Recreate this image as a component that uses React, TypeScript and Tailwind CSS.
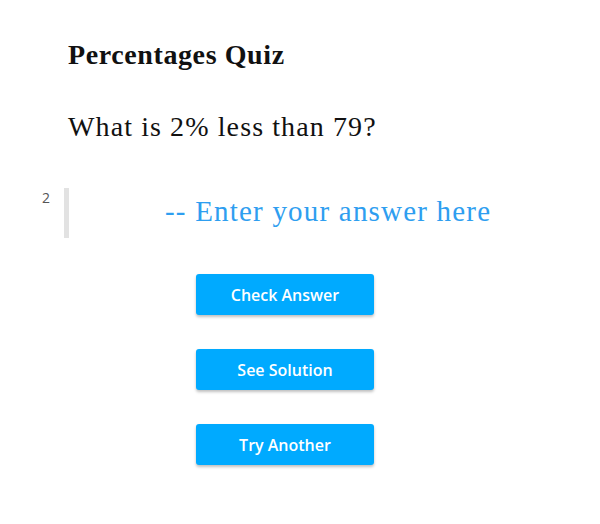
export default function App() {
  return (
    <div className="w-[600px] h-[524px] bg-white" style={{ fontFamily: '"Liberation Serif", serif' }}>
      <div className="pl-[68px] pt-[37px]">
        <h1 className="text-[28px] font-bold leading-[36px] tracking-[0.6px] text-[#111]">Percentages Quiz</h1>
        <p className="mt-[36px] text-[28px] leading-[36px] tracking-[1.1px] text-[#111]">What is 2% less than 79?</p>
      </div>
      <div className="mt-[43px] flex">
        <div className="w-[64px] flex justify-end pr-[14px] text-[14px] leading-[20px] text-[#555]" style={{ fontFamily: '"Open Sans", sans-serif' }}>2</div>
        <div className="w-[5px] h-[50px] bg-[#e2e2e2]"></div>
        <div className="flex-1 pl-[96px] pt-[5px] text-[29px] leading-[36px] tracking-[1.2px] text-[#2e9ef0]">-- Enter your answer here</div>
      </div>
      <div className="mt-[36px] flex flex-col items-start pl-[196px] gap-[34px]" style={{ fontFamily: '"Open Sans", sans-serif' }}>
        {["Check Answer", "See Solution", "Try Another"].map((t) => (
          <button key={t} className="w-[178px] h-[41px] rounded-[3px] bg-[#00aaff] text-white text-[16px] font-semibold shadow-[0_2px_3px_rgba(0,0,0,0.25)]">
            {t}
          </button>
        ))}
      </div>
    </div>
  );
}
